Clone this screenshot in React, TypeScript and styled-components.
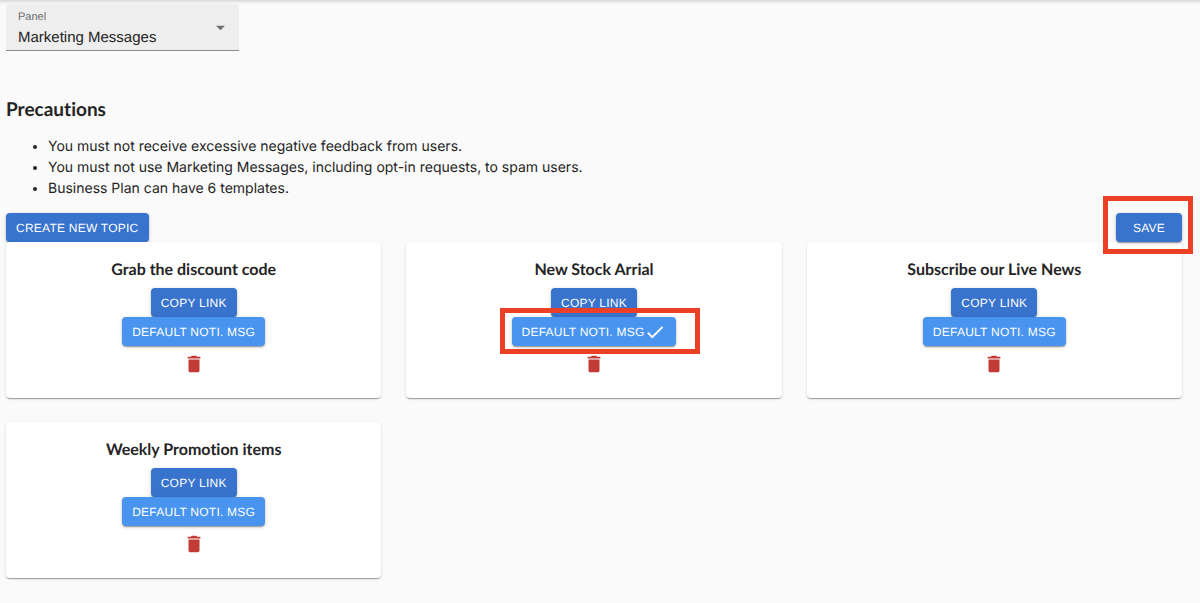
import React from "react";
import styled, { createGlobalStyle, css } from "styled-components";

const GlobalStyle = createGlobalStyle`
  *, *::before, *::after { box-sizing: border-box; }
  body {
    margin: 0;
    background: #fafafa;
    color: #242424;
    font-family: Inter, "Liberation Sans", sans-serif;
    font-variant-ligatures: none;
    text-rendering: geometricPrecision;
  }
`;

const Page = styled.main`
  padding: 4px 18px 24px 6px;
  box-shadow: inset 0 5px 4px -4px rgba(0, 0, 0, 0.2);
`;

const PanelField = styled.div`
  position: relative;
  display: flex;
  flex-direction: column;
  width: 233px;
  height: 47px;
  background: #eeeeee;
  border-bottom: 1px solid #8c8c8c;
  border-radius: 4px 4px 0 0;
  font-family: "Liberation Sans", sans-serif;
`;

const PanelLabel = styled.label`
  position: absolute;
  top: 7px;
  left: 12px;
  color: #6c6c6c;
  font-size: 11px;
  line-height: 13px;
  pointer-events: none;
`;

const PanelSelect = styled.select`
  flex: 1;
  width: 100%;
  padding: 21px 32px 0 12px;
  border: 0;
  background: transparent;
  color: #242424;
  appearance: none;
  font: 15px/18px "Liberation Sans", sans-serif;
  text-rendering: inherit;
`;

const Caret = styled.svg`
  position: absolute;
  top: 13px;
  right: 8px;
  width: 21px;
  height: 21px;
  fill: #6f6f6f;
  pointer-events: none;
`;

const Heading = styled.h2`
  margin: 46px 0 13px;
  font-family: Lato, sans-serif;
  font-size: 19px;
  font-weight: 700;
  line-height: 26px;
`;

const Rules = styled.ul`
  margin: 0 0 14px;
  padding-left: 42px;
  font-size: 14px;
  line-height: 21px;
`;

const Toolbar = styled.div`
  display: flex;
  justify-content: space-between;
`;

const Button = styled.button<{ $tone?: "main" | "light" }>`
  display: inline-flex;
  align-items: center;
  justify-content: center;
  min-width: 66px;
  height: 29px;
  padding: 0 10px;
  border: 0;
  border-radius: 4px;
  background: ${(p) => (p.$tone === "light" ? "#4994ee" : "#3873cd")};
  color: #ffffff;
  font: 12px/20px "Liberation Sans", sans-serif;
  letter-spacing: 0.02em;
  text-rendering: inherit;
  white-space: nowrap;
  text-transform: uppercase;
  cursor: pointer;
  box-shadow: 0 2px 1px -1px rgba(0, 0, 0, 0.2), 0 1px 2px rgba(0, 0, 0, 0.2),
    0 1px 4px rgba(0, 0, 0, 0.14);
`;

const Marked = styled.div<{ $area: "save" | "message" }>`
  position: relative;
  display: flex;

  &::after {
    content: "";
    position: absolute;
    z-index: 1;
    border: 5px solid #ec4026;
    pointer-events: none;
    ${(p) =>
      p.$area === "save"
        ? css`inset: -17px -11px -12px -13px;`
        : css`inset: -9px -24px -8px -12px;`}
  }
`;

const Cards = styled.div`
  display: grid;
  grid-template-columns: repeat(3, minmax(0, 1fr));
  gap: 24px 25px;
`;

const Card = styled.section`
  display: flex;
  flex-direction: column;
  align-items: center;
  padding: 16px 16px 19px;
  border-radius: 4px;
  background: #ffffff;
  box-shadow: 0 2px 1px -1px rgba(0, 0, 0, 0.2), 0 1px 1px rgba(0, 0, 0, 0.14),
    0 1px 3px rgba(0, 0, 0, 0.12);
`;

const CardTitle = styled.h3`
  margin: 0 0 6px;
  font-family: Lato, sans-serif;
  font-size: 16px;
  font-weight: 700;
  line-height: 24px;
`;

const DeleteButton = styled.button`
  display: flex;
  margin-top: 3px;
  padding: 4px;
  border: 0;
  background: transparent;
  color: #c23c35;
  cursor: pointer;
`;

const Icon = styled.svg`
  width: 22px;
  height: 22px;
  fill: currentColor;
`;

const topics = [
  { title: "Grab the discount code", selected: false },
  { title: "New Stock Arrial", selected: true },
  { title: "Subscribe our Live News", selected: false },
  { title: "Weekly Promotion items", selected: false },
];

function MessageButton({ selected }: { selected: boolean }) {
  if (!selected) return <Button $tone="light">Default Noti. Msg</Button>;
  return (
    <Marked $area="message">
      <Button $tone="light">
        Default Noti. Msg
        <Icon viewBox="0 0 24 24" aria-hidden="true">
          <path d="M9 16.2 4.8 12l-1.4 1.4L9 19 21 7l-1.4-1.4L9 16.2z" />
        </Icon>
      </Button>
    </Marked>
  );
}

export default function App() {
  return (
    <>
      <GlobalStyle />
      <Page>
        <PanelField>
          <PanelLabel htmlFor="panel">Panel</PanelLabel>
          <PanelSelect id="panel" defaultValue="marketing">
            <option value="marketing">Marketing Messages</option>
          </PanelSelect>
          <Caret viewBox="0 0 24 24" aria-hidden="true">
            <path d="M7 10l5 5 5-5z" />
          </Caret>
        </PanelField>

        <Heading>Precautions</Heading>
        <Rules>
          <li>You must not receive excessive negative feedback from users.</li>
          <li>You must not use Marketing Messages, including opt-in requests, to spam users.</li>
          <li>Business Plan can have 6 templates.</li>
        </Rules>

        <Toolbar>
          <Button>Create New Topic</Button>
          <Marked $area="save">
            <Button>Save</Button>
          </Marked>
        </Toolbar>

        <Cards>
          {topics.map((topic) => (
            <Card key={topic.title}>
              <CardTitle>{topic.title}</CardTitle>
              <Button>Copy Link</Button>
              <MessageButton selected={topic.selected} />
              <DeleteButton aria-label={`Delete ${topic.title}`}>
                <Icon viewBox="0 0 24 24" aria-hidden="true">
                  <path d="M6 19c0 1.1.9 2 2 2h8c1.1 0 2-.9 2-2V7H6v12zM19 4h-3.5l-1-1h-5l-1 1H5v2h14V4z" />
                </Icon>
              </DeleteButton>
            </Card>
          ))}
        </Cards>
      </Page>
    </>
  );
}
